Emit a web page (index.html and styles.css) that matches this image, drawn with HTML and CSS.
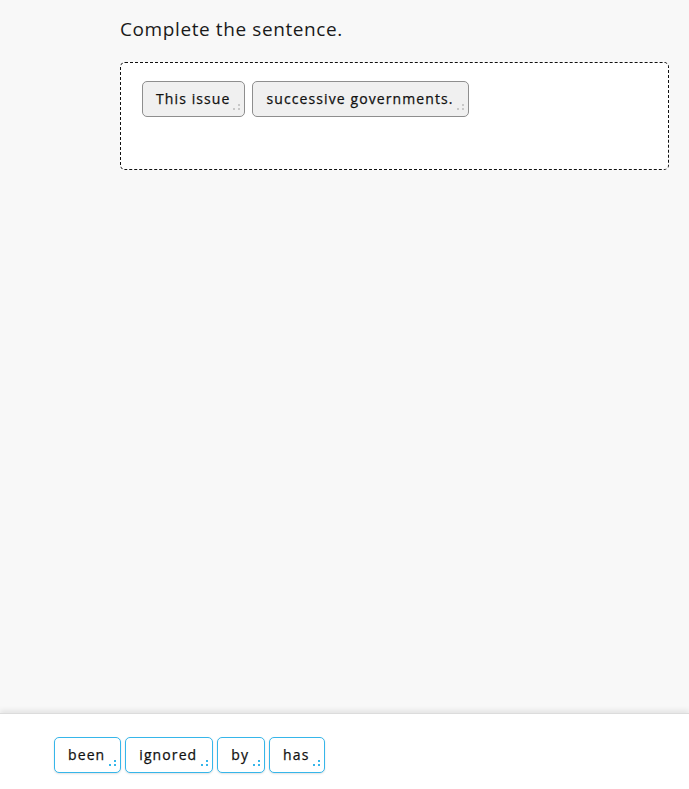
FILE: index.html
```html
<!DOCTYPE html>
<html lang="en">
<head>
    <meta charset="UTF-8">
    <title>Complete the sentence</title>
    <link rel="stylesheet" href="styles.css">
</head>
<body>
    <div class="page">
        <div class="question">
            <h1>Complete the sentence.</h1>
            <div class="answer-zone">
                <span class="chip chip-fixed">This issue<i class="grip"></i></span>
                <span class="chip chip-fixed">successive governments.<i class="grip"></i></span>
            </div>
        </div>
        <div class="word-bank">
            <span class="chip chip-word">been<i class="grip"></i></span>
            <span class="chip chip-word">ignored<i class="grip"></i></span>
            <span class="chip chip-word">by<i class="grip"></i></span>
            <span class="chip chip-word">has<i class="grip"></i></span>
        </div>
    </div>
</body>
</html>
```

FILE: styles.css
```css
html, body {
    margin: 0;
    padding: 0;
    height: 100%;
}
body {
    background: #f8f8f8;
    font-family: 'Open Sans', Arial, sans-serif;
    color: #111;
}
.page {
    min-height: 100vh;
    display: flex;
    flex-direction: column;
}
.question {
    flex: 1;
    padding: 15px 20px 0 120px;
}
h1 {
    font-size: 19px;
    font-weight: 400;
    letter-spacing: 0.6px;
    margin: 0 0 19px 0;
    line-height: 28px;
    color: #1a1a1a;
}
.answer-zone {
    border: 1px dashed #111;
    border-radius: 5px;
    background: #fff;
    height: 88px;
    padding: 18px 21px 0 21px;
    display: flex;
    align-items: flex-start;
    gap: 7px;
}
.chip {
    position: relative;
    display: inline-flex;
    align-items: center;
    box-sizing: border-box;
    height: 36px;
    padding: 0 14px 1px 13px;
    border-radius: 5px;
    font-size: 14px;
    font-weight: 400;
    -webkit-text-stroke: 0.25px #111;
    letter-spacing: 1.1px;
    color: #111;
}
.chip-fixed {
    background: #f0f0f0;
    border: 1px solid #8e8e8e;
}
.chip-word {
    background: #fff;
    border: 1px solid #36b6ea;
    box-shadow: 0 1px 2px rgba(0,0,0,0.12);
    padding-right: 15px;
}
.grip {
    position: absolute;
    right: 4px;
    bottom: 6px;
    width: 7px;
    height: 6px;
    background:
        linear-gradient(var(--dot), var(--dot)) 5px 0 / 2px 2px no-repeat,
        linear-gradient(var(--dot), var(--dot)) 0 4px / 2px 2px no-repeat,
        linear-gradient(var(--dot), var(--dot)) 5px 4px / 2px 2px no-repeat;
}
.chip-fixed .grip { --dot: #c8c8c8; }
.chip-word .grip { --dot: #36b6ea; }
.word-bank {
    height: 76px;
    box-sizing: border-box;
    background: #fff;
    padding: 23px 54px 0 54px;
    display: flex;
    align-items: flex-start;
    gap: 4px;
    box-shadow: 0 -3px 5px rgba(0,0,0,0.08);
    border-top: 1px solid #dcdcdc;
}
```
